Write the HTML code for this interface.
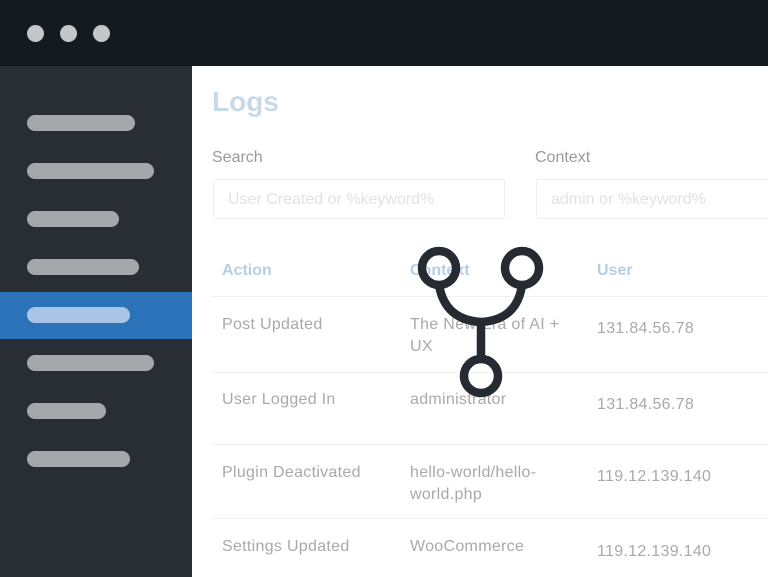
<!DOCTYPE html><html><head><style>
body{margin:0;width:768px;height:577px;overflow:hidden;background:#fff;font-family:"Liberation Sans",sans-serif;position:relative}
.top{position:absolute;left:0;top:0;width:768px;height:66px;background:#131b21}
.dot{position:absolute;top:25px;width:17px;height:17px;border-radius:50%;background:#c4c6c9}
.side{position:absolute;left:0;top:66px;width:192px;height:511px;background:#292d34}
.bar{position:absolute;left:27px;height:16px;border-radius:8px;background:#a6a7aa}
.act{position:absolute;left:0;top:292px;width:192px;height:47px;background:#2c72b8}
.t{position:absolute;white-space:nowrap}
.lbl{color:#9a9a9a;font-size:16px}
.inp{position:absolute;top:179px;height:40px;border:1px solid #eee;border-radius:3px;box-sizing:border-box;color:#e2e2e2;font-size:16px;padding:11px 14px}
.th{color:#b7cde5;font-size:16px;font-weight:bold}
.td{color:#a9a9a9;font-size:16px;line-height:22px;letter-spacing:0.3px}
.ln{position:absolute;left:212px;width:556px;height:1px;background:#f0f0f0}
</style></head><body>
<div class="top"></div>
<div class="dot" style="left:27px"></div><div class="dot" style="left:60px"></div><div class="dot" style="left:93px"></div>
<div class="side"></div>
<div class="act"></div>
<div class="bar" style="top:115px;width:108px"></div>
<div class="bar" style="top:163px;width:127px"></div>
<div class="bar" style="top:211px;width:92px"></div>
<div class="bar" style="top:259px;width:112px"></div>
<div class="bar" style="top:307px;width:103px;background:#a9c5e6"></div>
<div class="bar" style="top:355px;width:127px"></div>
<div class="bar" style="top:403px;width:79px"></div>
<div class="bar" style="top:451px;width:103px"></div>
<div class="t" style="left:212px;top:86px;font-size:28px;font-weight:bold;color:#c9d9ea">Logs</div>
<div class="t lbl" style="left:212px;top:149px">Search</div>
<div class="t lbl" style="left:535px;top:149px">Context</div>
<div class="inp" style="left:213px;width:292px">User Created or %keyword%</div>
<div class="inp" style="left:536px;width:240px">admin or %keyword%</div>
<div class="t th" style="left:222px;top:262px">Action</div>
<div class="t th" style="left:410px;top:262px">Context</div>
<div class="t th" style="left:597px;top:262px">User</div>
<div class="ln" style="top:296px"></div>
<div class="t td" style="left:222px;top:314px">Post Updated</div>
<div class="t td" style="left:410px;top:314px">The New Era of AI +<br>UX</div>
<div class="t td" style="left:597px;top:318px">131.84.56.78</div>
<div class="ln" style="top:372px"></div>
<div class="t td" style="left:222px;top:389px">User Logged In</div>
<div class="t td" style="left:410px;top:389px">administrator</div>
<div class="t td" style="left:597px;top:394px">131.84.56.78</div>
<div class="ln" style="top:444px"></div>
<div class="t td" style="left:222px;top:462px">Plugin Deactivated</div>
<div class="t td" style="left:410px;top:462px">hello-world/hello-<br>world.php</div>
<div class="t td" style="left:597px;top:466px">119.12.139.140</div>
<div class="ln" style="top:518px"></div>
<div class="t td" style="left:222px;top:536px">Settings Updated</div>
<div class="t td" style="left:410px;top:536px">WooCommerce</div>
<div class="t td" style="left:597px;top:541px">119.12.139.140</div>
<svg style="position:absolute;left:0;top:0" width="768" height="577">
<g fill="none" stroke="#262b31" stroke-width="8.5">
<circle cx="439" cy="268" r="17"/><circle cx="522" cy="268" r="17"/><circle cx="481" cy="376" r="17"/>
<path d="M439 285 Q445 320 481 322 Q517 320 522 285 M481 322 V359"/>
</g></svg>
</body></html>
